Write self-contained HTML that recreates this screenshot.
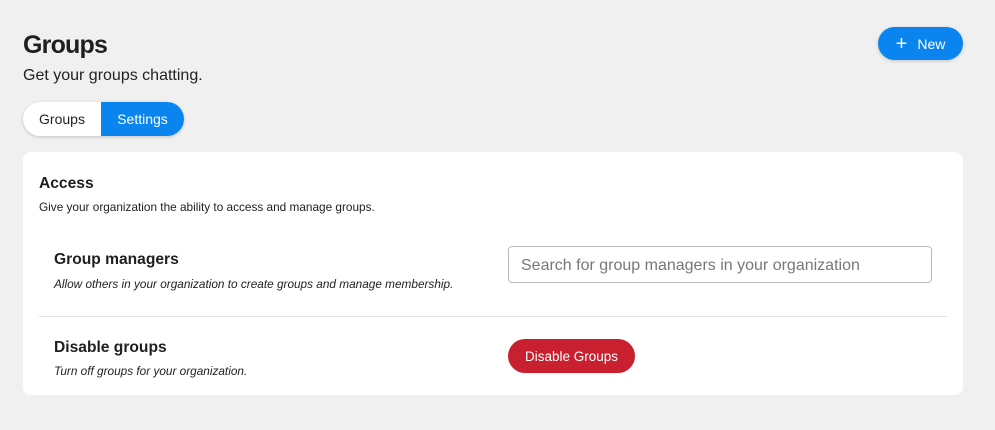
<!DOCTYPE html>
<html><head><style>
*{box-sizing:border-box;margin:0;padding:0}
body{width:995px;height:430px;background:#f0f0f0;font-family:"Liberation Sans",sans-serif;color:#222;position:relative;overflow:hidden}
.abs{position:absolute}
h1{position:absolute;left:23px;top:31px;font-size:25px;font-weight:bold;letter-spacing:-0.8px;color:#1f1f1f}
.sub{left:23px;top:67px;font-size:16px}
.tabs{left:23px;top:102px;height:34px;width:161px;border-radius:17px;background:#fff;box-shadow:0 1px 3px rgba(0,0,0,.2);overflow:hidden;display:flex;font-size:14px}
.tabs div{display:flex;align-items:center;justify-content:center}
.new{left:878px;top:27px;width:85px;height:33px;border-radius:17px;background:#0a84ee;color:#fff;font-size:14px;display:flex;align-items:center;justify-content:center;box-shadow:0 1px 3px rgba(0,0,0,.2)}
.card{left:23px;top:152px;width:940px;height:243px;background:#fff;border-radius:8px}
.t{font-weight:bold;font-size:15.6px;color:#1f1f1f}
.s{font-size:11.8px;color:#222}
</style></head><body>
<h1>Groups</h1>
<div class="abs sub">Get your groups chatting.</div>
<div class="abs tabs"><div style="width:78px">Groups</div><div style="width:83px;background:#0a84ee;color:#fff">Settings</div></div>
<div class="abs new"><span style="font-size:20px;margin-right:10px;line-height:1;font-weight:300">+</span>New</div>
<div class="abs card">
<div class="abs t" style="left:16px;top:23px">Access</div>
<div class="abs s" style="left:16px;top:48px">Give your organization the ability to access and manage groups.</div>
<div class="abs t" style="left:31px;top:99px">Group managers</div>
<div class="abs s" style="left:31px;top:125px;font-style:italic">Allow others in your organization to create groups and manage membership.</div>
<div class="abs" style="left:485px;top:94px;width:424px;height:37px;border:1px solid #bbb;border-radius:4px;padding:10px 12px;font-size:16px;color:#777">Search for group managers in your organization</div>
<div class="abs" style="left:16px;top:164px;width:908px;height:1px;background:#e2e2e2"></div>
<div class="abs t" style="left:31px;top:187px">Disable groups</div>
<div class="abs s" style="left:31px;top:212px;font-style:italic">Turn off groups for your organization.</div>
<div class="abs" style="left:485px;top:187px;width:127px;height:34px;border-radius:17px;background:#c8202f;color:#fff;font-size:13.5px;display:flex;align-items:center;justify-content:center">Disable Groups</div>
</div>
</body></html>
